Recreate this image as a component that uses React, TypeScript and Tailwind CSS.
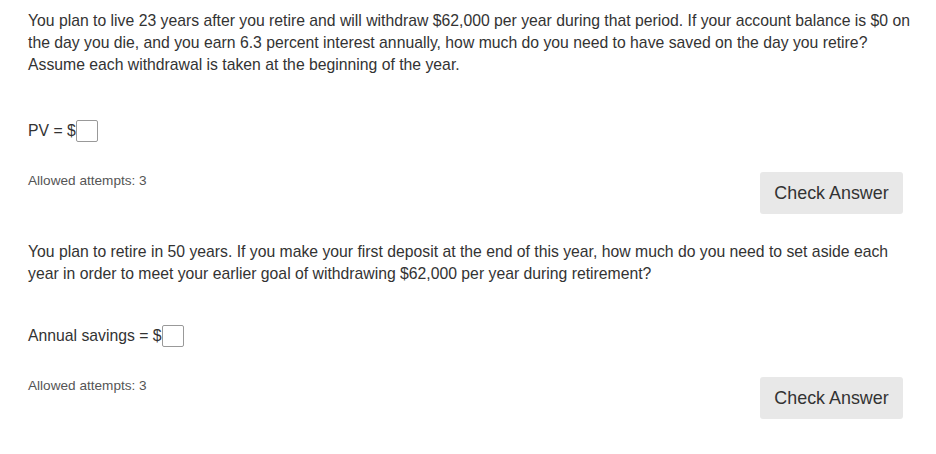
import React from 'react';

interface QuestionProps {
    text: string;
    label: string;
    gapTop: string;
}

const Question: React.FC<QuestionProps> = ({ text, label, gapTop }) => {
    return (
        <div>
            <p className="text-[15.75px] leading-[22px] text-[#333]">{text}</p>
            <div className={`${gapTop} flex items-center h-[22px] text-[15.75px] text-[#333]`}>
                <span>{label} = $</span>
                <input
                    type="text"
                    className="w-[22px] h-[22px] border border-[#999] rounded-[2px] bg-white outline-none"
                />
            </div>
            <div className="mt-[31px] flex items-start justify-between">
                <span className="text-[13.6px] leading-[16px] text-[#555]">Allowed attempts: 3</span>
                <button className="mt-[-1px] mr-[7px] w-[143px] h-[42px] rounded-[3px] bg-[#e8e8e8] text-[17.9px] text-[#333]">
                    Check Answer
                </button>
            </div>
        </div>
    );
};

export default function App() {
    return (
        <div className="w-[936px] h-[454px] bg-white pl-[28px] pr-[26px] pt-[10px] font-['Liberation_Sans',Arial,sans-serif]">
            <Question
                text="You plan to live 23 years after you retire and will withdraw $62,000 per year during that period. If your account balance is $0 on the day you die, and you earn 6.3 percent interest annually, how much do you need to have saved on the day you retire? Assume each withdrawal is taken at the beginning of the year."
                label="PV"
                gapTop="mt-[44px]"
            />
            <div className="mt-[27px]">
                <Question
                    text="You plan to retire in 50 years. If you make your first deposit at the end of this year, how much do you need to set aside each year in order to meet your earlier goal of withdrawing $62,000 per year during retirement?"
                    label="Annual savings"
                    gapTop="mt-[40px]"
                />
            </div>
        </div>
    );
}
